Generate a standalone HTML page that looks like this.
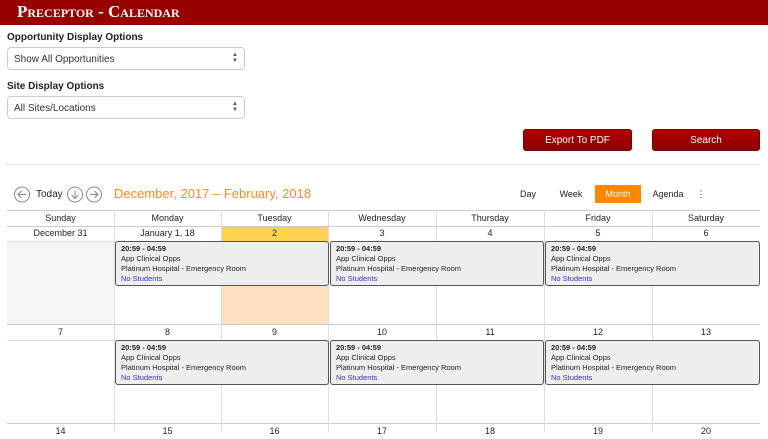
<!DOCTYPE html>
<html><head><meta charset="utf-8"><style>
*{box-sizing:border-box;margin:0;padding:0}
body{width:768px;height:432px;overflow:hidden;background:#fff;font-family:"Liberation Sans",Arial,sans-serif;color:#222;position:relative}
.a{position:absolute}
.hdr{left:0;top:0;width:768px;height:25px;background:#990000}
.title{left:17px;top:2px;font-family:"Liberation Serif",serif;font-weight:bold;font-variant:small-caps;color:#fff;font-size:17px;line-height:20px}
.lbl{font-size:10px;font-weight:bold;color:#222}
.sel{left:7px;width:238px;height:23px;border:1px solid #ccc;border-radius:4px;font-size:10px;padding:6px 6px;color:#333;background:#fff}
.sel span{position:absolute;right:6px;top:4px;font-size:6px;line-height:6px;color:#555}
.btn{top:129px;height:22px;border-radius:3px;background:linear-gradient(#b30000,#8c0000);color:#fff;font-size:10px;text-align:center;line-height:22px;border:1px solid #7a0000}
.hr{left:5px;top:164px;width:755px;height:1px;background:#e6e6e6}
.range{left:114px;top:186px;color:#ff8a1f;font-size:13px}
.tab{top:185px;height:18px;font-size:9px;line-height:18px;text-align:center;color:#222}
.cell{font-size:9px;text-align:center;line-height:15px;color:#222}
.hl{height:1px;background:#ccc;left:7px;width:753px}
.vl{width:1px;background:#ddd}
.ev{height:45px;border:1px solid #555;border-radius:3px;background:#eee;font-size:7.5px;padding:2px 5px;line-height:10px}
.ev b{font-weight:bold}
.ev .s{color:#3333cc}
</style></head><body>
<div class="a hdr"></div>
<div class="a title">Preceptor - Calendar</div>
<div class="a lbl" style="left:7px;top:32px">Opportunity Display Options</div>
<div class="a sel" style="top:47px">Show All Opportunities<span>▲<br>▼</span></div>
<div class="a lbl" style="left:7px;top:81px">Site Display Options</div>
<div class="a sel" style="top:96px">All Sites/Locations<span>▲<br>▼</span></div>
<div class="a btn" style="left:523px;width:109px">Export To PDF</div>
<div class="a btn" style="left:652px;width:108px">Search</div>
<div class="a hr"></div>

<svg class="a" style="left:14px;top:186px" width="90" height="17" viewBox="0 0 90 17" fill="none" stroke="#888" stroke-width="1">
<circle cx="8" cy="8.5" r="7.5"/><path d="M12 8.5H4M7.5 5L4 8.5 7.5 12"/>
<circle cx="61" cy="8.5" r="7.5"/><path d="M61 4.5V12.5M57.5 9L61 12.5 64.5 9"/>
<circle cx="80" cy="8.5" r="7.5"/><path d="M76 8.5H84M80.5 5L84 8.5 80.5 12"/>
</svg>
<div class="a" style="left:36px;top:189px;font-size:10px">Today</div>
<div class="a range">December, 2017 – February, 2018</div>
<div class="a tab" style="left:512px;width:32px">Day</div>
<div class="a tab" style="left:552px;width:38px">Week</div>
<div class="a tab" style="left:595px;width:46px;background:#ff8800;color:#fff">Month</div>
<div class="a tab" style="left:646px;width:44px">Agenda</div>
<div class="a tab" style="left:696px;width:10px">⋮</div>

<div class="a" style="left:222px;top:226px;width:106px;height:15px;background:#fdd250"></div>
<div class="a" style="left:7px;top:241px;width:107px;height:83px;background:#f5f5f5"></div>
<div class="a" style="left:222px;top:286px;width:106px;height:38px;background:#fde0c0"></div>

<div class="a hl" style="top:210px"></div>
<div class="a hl" style="top:226px"></div>
<div class="a hl" style="top:241px;background:#ddd"></div>
<div class="a hl" style="top:324px"></div>
<div class="a hl" style="top:340px;background:#ddd"></div>
<div class="a hl" style="top:423px"></div>

<div class="a vl" style="left:114px;top:210px;height:222px"></div>
<div class="a vl" style="left:221px;top:210px;height:222px"></div>
<div class="a vl" style="left:328px;top:210px;height:222px"></div>
<div class="a vl" style="left:436px;top:210px;height:222px"></div>
<div class="a vl" style="left:544px;top:210px;height:222px"></div>
<div class="a vl" style="left:652px;top:210px;height:222px"></div>

<div class="a cell" style="left:7px;top:211px;width:107px">Sunday</div>
<div class="a cell" style="left:114px;top:211px;width:107px">Monday</div>
<div class="a cell" style="left:221px;top:211px;width:107px">Tuesday</div>
<div class="a cell" style="left:328px;top:211px;width:108px">Wednesday</div>
<div class="a cell" style="left:436px;top:211px;width:108px">Thursday</div>
<div class="a cell" style="left:544px;top:211px;width:108px">Friday</div>
<div class="a cell" style="left:652px;top:211px;width:108px">Saturday</div>

<div class="a cell" style="left:7px;top:226px;width:107px">December 31</div>
<div class="a cell" style="left:114px;top:226px;width:107px">January 1, 18</div>
<div class="a cell" style="left:221px;top:226px;width:107px">2</div>
<div class="a cell" style="left:328px;top:226px;width:108px">3</div>
<div class="a cell" style="left:436px;top:226px;width:108px">4</div>
<div class="a cell" style="left:544px;top:226px;width:108px">5</div>
<div class="a cell" style="left:652px;top:226px;width:108px">6</div>

<div class="a cell" style="left:7px;top:325px;width:107px">7</div>
<div class="a cell" style="left:114px;top:325px;width:107px">8</div>
<div class="a cell" style="left:221px;top:325px;width:107px">9</div>
<div class="a cell" style="left:328px;top:325px;width:108px">10</div>
<div class="a cell" style="left:436px;top:325px;width:108px">11</div>
<div class="a cell" style="left:544px;top:325px;width:108px">12</div>
<div class="a cell" style="left:652px;top:325px;width:108px">13</div>

<div class="a cell" style="left:7px;top:424px;width:107px">14</div>
<div class="a cell" style="left:114px;top:424px;width:107px">15</div>
<div class="a cell" style="left:221px;top:424px;width:107px">16</div>
<div class="a cell" style="left:328px;top:424px;width:108px">17</div>
<div class="a cell" style="left:436px;top:424px;width:108px">18</div>
<div class="a cell" style="left:544px;top:424px;width:108px">19</div>
<div class="a cell" style="left:652px;top:424px;width:108px">20</div>

<div class="a ev" style="left:115px;top:241px;width:214px"><b>20:59 - 04:59</b><br>App Clinical Opps<br>Platinum Hospital - Emergency Room<br><span class="s">No Students</span></div>
<div class="a ev" style="left:330px;top:241px;width:214px"><b>20:59 - 04:59</b><br>App Clinical Opps<br>Platinum Hospital - Emergency Room<br><span class="s">No Students</span></div>
<div class="a ev" style="left:545px;top:241px;width:215px"><b>20:59 - 04:59</b><br>App Clinical Opps<br>Platinum Hospital - Emergency Room<br><span class="s">No Students</span></div>
<div class="a ev" style="left:115px;top:340px;width:214px"><b>20:59 - 04:59</b><br>App Clinical Opps<br>Platinum Hospital - Emergency Room<br><span class="s">No Students</span></div>
<div class="a ev" style="left:330px;top:340px;width:214px"><b>20:59 - 04:59</b><br>App Clinical Opps<br>Platinum Hospital - Emergency Room<br><span class="s">No Students</span></div>
<div class="a ev" style="left:545px;top:340px;width:215px"><b>20:59 - 04:59</b><br>App Clinical Opps<br>Platinum Hospital - Emergency Room<br><span class="s">No Students</span></div>
</body></html>
